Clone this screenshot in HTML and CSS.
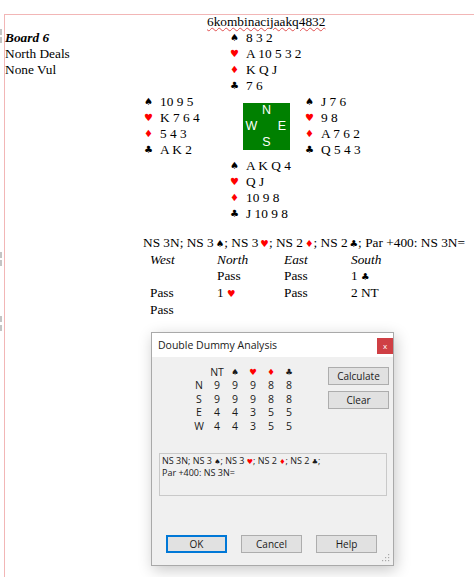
FILE: index.html
```html
<!DOCTYPE html>
<html>
<head>
<meta charset="utf-8">
<link rel="stylesheet" href="styles.css">
</head>
<body>
<div class="marks">
  <span class="mark m1"></span><span class="mark m2"></span>
  <span class="mark m3"></span><span class="mark m4"></span>
  <span class="mark m5"></span><span class="mark m6"></span>
</div>
<div class="page">
  <div class="title"><span class="spell">6kombinacijaakq4832</span></div>
  <div class="deal">
    <div class="info">
      <div class="board">Board 6</div>
      <div>North Deals</div>
      <div>None Vul</div>
    </div>
    <div class="hand north">
      <div class="line"><span class="suit">♠</span>8 3 2</div>
      <div class="line"><span class="suit red">♥</span>A 10 5 3 2</div>
      <div class="line"><span class="suit red">♦</span>K Q J</div>
      <div class="line"><span class="suit">♣</span>7 6</div>
    </div>
    <div class="hand west">
      <div class="line"><span class="suit">♠</span>10 9 5</div>
      <div class="line"><span class="suit red">♥</span>K 7 6 4</div>
      <div class="line"><span class="suit red">♦</span>5 4 3</div>
      <div class="line"><span class="suit">♣</span>A K 2</div>
    </div>
    <div class="compass">
      <span class="cn">N</span>
      <span class="cw">W</span>
      <span class="ce">E</span>
      <span class="cs">S</span>
    </div>
    <div class="hand east">
      <div class="line"><span class="suit">♠</span>J 7 6</div>
      <div class="line"><span class="suit red">♥</span>9 8</div>
      <div class="line"><span class="suit red">♦</span>A 7 6 2</div>
      <div class="line"><span class="suit">♣</span>Q 5 4 3</div>
    </div>
    <div class="hand south">
      <div class="line"><span class="suit">♠</span>A K Q 4</div>
      <div class="line"><span class="suit red">♥</span>Q J</div>
      <div class="line"><span class="suit red">♦</span>10 9 8</div>
      <div class="line"><span class="suit">♣</span>J 10 9 8</div>
    </div>
  </div>
  <div class="par">NS 3N; NS 3<span class="ps">♠</span>; NS 3<span class="ps red">♥</span>; NS 2<span class="ps red">♦</span>; NS 2<span class="ps">♣</span>; Par +400: NS 3N=</div>
  <div class="auction">
    <div class="hd">West</div><div class="hd">North</div><div class="hd">East</div><div class="hd">South</div>
    <div></div><div>Pass</div><div>Pass</div><div>1 <span class="ps">♣</span></div>
    <div>Pass</div><div>1 <span class="ps red">♥</span></div><div>Pass</div><div>2 NT</div>
    <div>Pass</div><div></div><div></div><div></div>
  </div>
</div>

<div class="dialog">
  <div class="titlebar">
    <span class="dtitle">Double Dummy Analysis</span>
    <span class="close">x</span>
  </div>
  <div class="dbody">
    <div class="top">
      <div class="ddtable">
        <span></span><span>NT</span><span class="ts">♠</span><span class="ts red">♥</span><span class="ts red">♦</span><span class="ts">♣</span>
        <span>N</span><span>9</span><span>9</span><span>9</span><span>8</span><span>8</span>
        <span>S</span><span>9</span><span>9</span><span>9</span><span>8</span><span>8</span>
        <span>E</span><span>4</span><span>4</span><span>3</span><span>5</span><span>5</span>
        <span>W</span><span>4</span><span>4</span><span>3</span><span>5</span><span>5</span>
      </div>
      <div class="sidebtns">
        <div class="btn">Calculate</div>
        <div class="btn">Clear</div>
      </div>
    </div>
    <div class="result">
      <div>NS 3N; NS 3 <span class="rs">♠</span>; NS 3 <span class="rs red">♥</span>; NS 2 <span class="rs red">♦</span>; NS 2 <span class="rs">♣</span>;</div>
      <div>Par +400: NS 3N=</div>
    </div>
    <div class="btnrow">
      <div class="btn ok">OK</div>
      <div class="btn">Cancel</div>
      <div class="btn">Help</div>
    </div>
    <svg class="grip" width="8" height="8" viewBox="0 0 8 8">
      <rect x="6" y="0" width="1.2" height="1.2" fill="#a8a8a8"/>
      <rect x="3" y="3" width="1.2" height="1.2" fill="#a8a8a8"/>
      <rect x="6" y="3" width="1.2" height="1.2" fill="#a8a8a8"/>
      <rect x="0" y="6" width="1.2" height="1.2" fill="#a8a8a8"/>
      <rect x="3" y="6" width="1.2" height="1.2" fill="#a8a8a8"/>
      <rect x="6" y="6" width="1.2" height="1.2" fill="#a8a8a8"/>
    </svg>
  </div>
</div>
</body>
</html>
```

FILE: styles.css
```css
* { box-sizing: border-box; }
html, body { margin: 0; padding: 0; background: #fff; }
body {
  width: 474px;
  height: 577px;
  overflow: hidden;
  position: relative;
  font-family: "Liberation Serif", "Times New Roman", serif;
  font-size: 13.33px;
  line-height: 16px;
  color: #000;
}

.mark {
  position: absolute;
  left: 0;
  width: 2px;
  height: 6px;
  background: #c4c4c4;
}
.m1 { top: 29px; }
.m2 { top: 37px; }
.m3 { top: 252px; }
.m4 { top: 260px; }
.m5 { top: 316px; }
.m6 { top: 325px; }

.page {
  margin: 14px 0 0 4px;
  border-top: 1px solid #f2b6b6;
  border-left: 1px solid #f2b6b6;
  height: 563px;
}
.title {
  padding-left: 202px;
  margin-top: -1px;
}
.spell {
  text-decoration: underline wavy #e05050;
  text-decoration-thickness: 1px;
  text-underline-offset: 1px;
}

.deal {
  display: grid;
  grid-template-columns: 139px 86px 75px 1fr;
  grid-template-rows: 64px 64px 64px;
}
.info { grid-column: 1 / 3; grid-row: 1; }
.board { font-weight: bold; font-style: italic; }
.north { grid-column: 3 / 5; grid-row: 1; }
.west { grid-column: 2; grid-row: 2; }
.east { grid-column: 4; grid-row: 2; }
.south { grid-column: 3 / 5; grid-row: 3; }

.line { display: flex; white-space: pre; }
.suit {
  width: 16px;
  flex: none;
  font-family: "DejaVu Sans", sans-serif;
  font-size: 10px;
}
.red { color: #f00; }

.compass {
  grid-column: 3;
  grid-row: 2;
  align-self: center;
  margin-left: 13px;
  width: 47px;
  height: 47px;
  background: #008000;
  color: #fff;
  font-family: "Liberation Sans", Arial, sans-serif;
  font-size: 12.5px;
  line-height: 14px;
  display: grid;
  grid-template-columns: 16px 15px 16px;
  grid-template-rows: 15px 17px 15px;
  text-align: center;
}
.cn { grid-column: 2; grid-row: 1; }
.cw { grid-column: 1; grid-row: 2; align-self: center; margin-left: 1px; }
.ce { grid-column: 3; grid-row: 2; align-self: center; }
.cs { grid-column: 2; grid-row: 3; }

.par {
  margin-top: 13px;
  padding-left: 138px;
  white-space: nowrap;
}
.ps {
  font-family: "DejaVu Sans", sans-serif;
  font-size: 9.5px;
  margin-left: 2px;
}

.auction {
  display: grid;
  grid-template-columns: repeat(4, 67px);
  padding-left: 145px;
}
.auction .ps { margin-left: 0; }
.hd { font-style: italic; }

/* dialog */
.dialog {
  position: absolute;
  left: 151px;
  top: 332px;
  width: 243px;
  height: 234px;
  border: 1px solid #a9a9a9;
  background: #f0f0f0;
  box-shadow: 2px 4px 14px rgba(0, 0, 0, 0.22);
  font-family: "Open Sans", "Noto Sans", sans-serif;
  color: #1a1a1a;
  display: flex;
  flex-direction: column;
}
.titlebar {
  position: relative;
  height: 24px;
  background: #fff;
  display: flex;
  align-items: center;
  padding-left: 6px;
  font-size: 10.5px;
}
.close {
  position: absolute;
  right: 0;
  top: 5px;
  width: 16px;
  height: 16px;
  background: #cf3f44;
  color: #fff;
  font-size: 8px;
  line-height: 15px;
  text-align: center;
}
.dbody {
  position: relative;
  flex: 1;
}
.top {
  height: 96px;
  display: flex;
  align-items: flex-start;
  padding-top: 9px;
}
.ddtable {
  margin-left: 38px;
  display: grid;
  grid-template-columns: repeat(6, 18px);
  grid-auto-rows: 13.4px;
  font-size: 10.5px;
  line-height: 13.4px;
  text-align: center;
}
.ts {
  font-family: "DejaVu Sans", sans-serif;
  font-size: 8.5px;
}
.sidebtns {
  margin-left: auto;
  margin-right: 4px;
  margin-top: 1px;
  display: flex;
  flex-direction: column;
  gap: 6px;
}
.btn {
  width: 61px;
  height: 18px;
  background: #e1e1e1;
  border: 1px solid #adadad;
  font-size: 10px;
  line-height: 16px;
  text-align: center;
}
.btn.ok {
  border-color: #0078d7;
  box-shadow: inset 0 0 0 1px #0078d7;
}
.result {
  margin: 0 6px 0 7px;
  height: 43px;
  border: 1px solid #c9c9c9;
  background: #f0f0f0;
  padding: 2px 2px;
  font-size: 9px;
  line-height: 10.5px;
  white-space: nowrap;
}
.rs {
  font-family: "DejaVu Sans", sans-serif;
  font-size: 7px;
}
.btnrow {
  margin-top: 39px;
  margin-left: 14px;
  display: flex;
  gap: 14px;
}
.grip {
  position: absolute;
  right: 3px;
  bottom: 3px;
}
```
